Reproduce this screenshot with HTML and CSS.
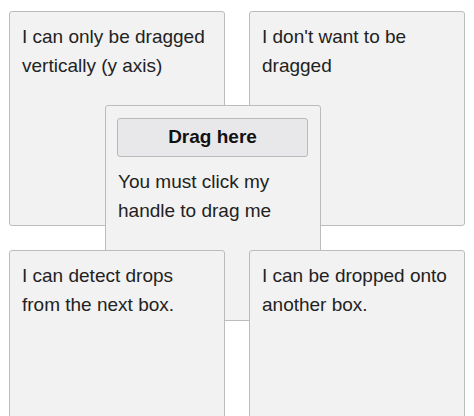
FILE: index.html
```html
<!DOCTYPE html>
<html>
<head>
<meta charset="utf-8">
<link rel="stylesheet" href="styles.css">
</head>
<body>
<div class="board">
  <div class="box">I can only be dragged vertically (y axis)</div>
  <div class="box">I don't want to be dragged</div>
  <div class="box floating">
    <div class="handle">Drag here</div>
    <div class="desc">You must click my handle to drag me</div>
  </div>
  <div class="box raised">I can detect drops from the next box.</div>
  <div class="box raised">I can be dropped onto another box.</div>
</div>
</body>
</html>
```
FILE: styles.css
```css
html, body {
  margin: 0;
  padding: 0;
  background: #ffffff;
}
body {
  font-family: "Liberation Sans", Arial, sans-serif;
  font-size: 19px;
  color: #222;
  overflow: hidden;
  width: 474px;
  height: 416px;
}
.board {
  position: relative;
  display: grid;
  grid-template-columns: 216px 216px;
  grid-auto-rows: 215px;
  column-gap: 24px;
  row-gap: 24px;
  padding: 11px 0 0 9px;
  height: 405px;
  overflow: hidden;
}
.box {
  box-sizing: border-box;
  background: #f2f2f2;
  border: 1px solid #bcbcbc;
  border-radius: 3px;
  padding: 10px 12px;
  line-height: 29px;
}
.raised {
  position: relative;
}
.floating {
  position: absolute;
  left: 105px;
  top: 105px;
  width: 216px;
  height: 216px;
  padding: 12px 12px 10px 11px;
}
.handle {
  box-sizing: border-box;
  height: 39px;
  background: #e8e8eb;
  border: 1px solid #b9b9b9;
  border-radius: 3px;
  font-weight: bold;
  text-align: center;
  line-height: 36px;
  color: #111;
}
.desc {
  margin-top: 10px;
  padding-left: 1px;
}
```
